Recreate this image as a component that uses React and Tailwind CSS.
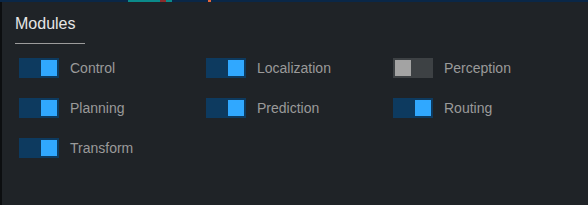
import React from 'react';

const modules = [
  { name: 'Control', on: true },
  { name: 'Localization', on: true },
  { name: 'Perception', on: false },
  { name: 'Planning', on: true },
  { name: 'Prediction', on: true },
  { name: 'Routing', on: true },
  { name: 'Transform', on: true },
];

const Toggle = ({ on }) => (
  <div
    className={`w-[40px] h-[20px] p-[2px] flex ${on ? 'bg-[#0d3a5f] justify-end' : 'bg-[#3d4144] justify-start'}`}
  >
    <div className={`w-[16px] h-[16px] ${on ? 'bg-[#30a8ff]' : 'bg-[#a3a3a3]'}`}></div>
  </div>
);

export default function App() {
  return (
    <div className="w-[588px] h-[205px] bg-[#1f2327] flex flex-col overflow-hidden" style={{ fontFamily: '"Liberation Sans", Arial, sans-serif' }}>
      {/* top strip */}
      <div className="h-[2px] bg-[#0a2747] flex shrink-0">
        <div className="w-[128px]"></div>
        <div className="w-[32px] bg-[#0b8a8a]"></div>
        <div className="w-[6px] bg-[#8a2c2c]"></div>
        <div className="w-[6px] bg-[#0b8a8a]"></div>
        <div className="w-[36px]"></div>
        <div className="w-[3px] bg-[#e8663a]"></div>
      </div>
      <div className="flex-1 flex border-l-2 border-[#0c0e10]">
        <div className="pl-[13px] pt-[12px] flex flex-col">
          <div className="text-[16px] leading-[20px] text-[#e6e6e6] w-[70px] pb-[9px] border-b border-[#9c9c9c]">Modules</div>
          <div className="grid grid-cols-[187px_187px_187px] auto-rows-[20px] gap-y-[20px] mt-[14px] pl-[4px]">
            {modules.map((m) => (
              <div key={m.name} className="flex items-center gap-[11px]">
                <Toggle on={m.on} />
                <span className="text-[14px] leading-[20px] text-[#9a9a9a]">{m.name}</span>
              </div>
            ))}
          </div>
        </div>
      </div>
    </div>
  );
}
